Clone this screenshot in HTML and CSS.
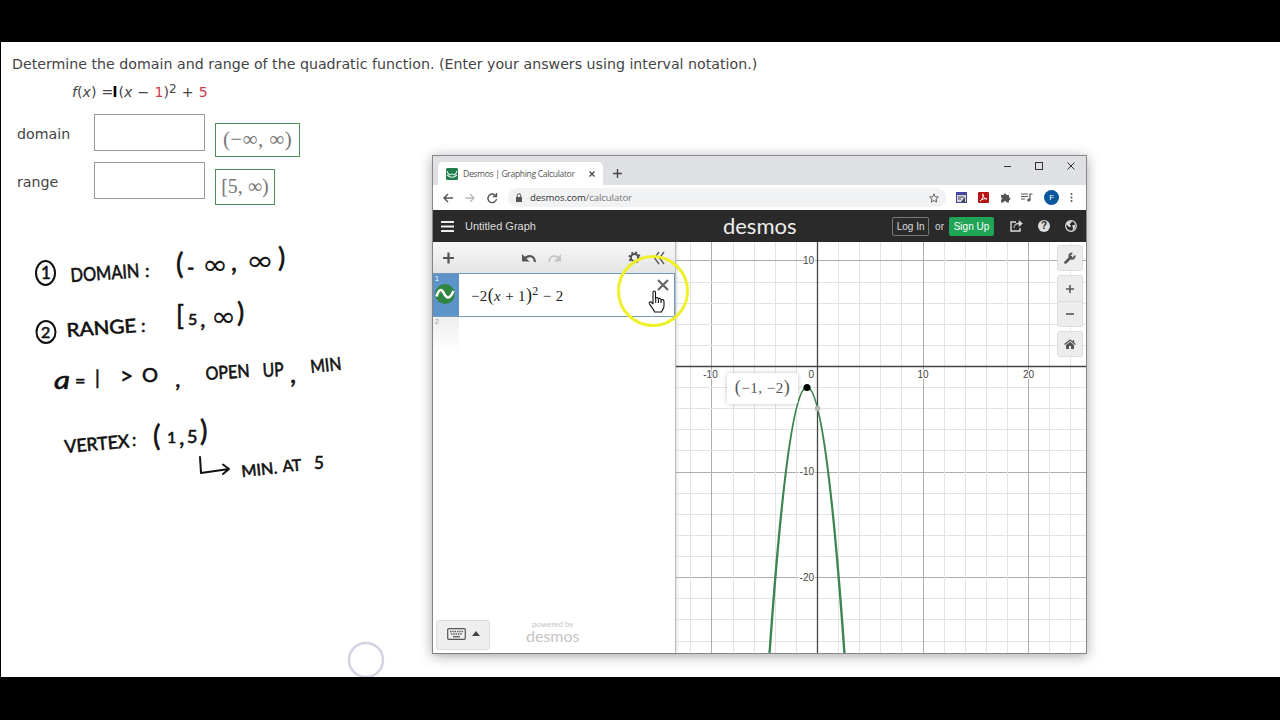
FILE: index.html
```html
<!DOCTYPE html>
<html lang="en">
<head>
    <meta charset="UTF-8">
    <meta name="viewport" content="width=device-width, initial-scale=1.0">
    <title>Domain and range of a quadratic function</title>
    <link rel="stylesheet" href="styles.css">
</head>
<body>
    <main class="board">
        <section class="question">
            <p class="prompt">Determine the domain and range of the quadratic function. (Enter your answers using interval notation.)</p>
            <p class="formula"><i>f</i>(<i>x</i>) =<b>l</b>(<i>x</i> − <span class="red">1</span>)<sup>2</sup> + <span class="red">5</span></p>
            <div class="answer-row">
                <label for="domain">domain</label>
                <input type="text" id="domain">
                <span class="answer answer-domain">(−∞, ∞)</span>
            </div>
            <div class="answer-row">
                <label for="range">range</label>
                <input type="text" id="range">
                <span class="answer answer-range">[5, ∞)</span>
            </div>
        </section>

        <!-- Handwritten notes -->
        <svg class="notes" viewBox="0 42 430 636" width="430" height="636">
            <g class="pen">
                <ellipse cx="45.5" cy="273" rx="9.5" ry="12"/>
                <ellipse cx="46" cy="332" rx="9.5" ry="11"/>
                <path d="M200 457L201 473L229 469M223 464.500L229 469L223 474"/>
            </g>
            <text x="41" y="279" font-size="17">1</text>
            <text x="71" y="282" font-size="19" textLength="69" lengthAdjust="spacingAndGlyphs" transform="rotate(-4 71 282)">DOMAIN</text>
            <text x="145" y="277" font-size="18">:</text>
            <text x="176" y="274" font-size="28">(</text>
            <text x="187" y="274" font-size="20">-</text>
            <text x="202" y="274" font-size="27" textLength="26" lengthAdjust="spacingAndGlyphs" class="inf">∞</text>
            <text x="231" y="271" font-size="26">,</text>
            <text x="246" y="270" font-size="27" textLength="28" lengthAdjust="spacingAndGlyphs" class="inf">∞</text>
            <text x="278" y="267" font-size="27">)</text>

            <text x="41" y="338" font-size="16">2</text>
            <text x="67" y="337" font-size="19" textLength="70" lengthAdjust="spacingAndGlyphs" transform="rotate(-4 67 337)">RANGE</text>
            <text x="141" y="332" font-size="18">:</text>
            <text x="176" y="325" font-size="26">[</text>
            <text x="188" y="325" font-size="16">5</text>
            <text x="200" y="327" font-size="24">,</text>
            <text x="211" y="326" font-size="27" textLength="25" lengthAdjust="spacingAndGlyphs" class="inf">∞</text>
            <text x="237" y="322" font-size="27">)</text>

            <text x="54" y="389" font-size="25" textLength="16" lengthAdjust="spacingAndGlyphs" font-style="italic">a</text>
            <text x="75" y="387" font-size="18">=</text>
            <text x="95" y="385" font-size="19">|</text>
            <text x="120" y="384" font-size="23">&gt;</text>
            <text x="142" y="382" font-size="19" textLength="16" lengthAdjust="spacingAndGlyphs">O</text>
            <text x="175" y="387" font-size="24">,</text>
            <text x="206" y="380" font-size="18" textLength="44" lengthAdjust="spacingAndGlyphs" transform="rotate(-4 206 380)">OPEN</text>
            <text x="263" y="377" font-size="19" textLength="21" lengthAdjust="spacingAndGlyphs" transform="rotate(-3 263 377)">UP</text>
            <text x="290" y="383" font-size="27">,</text>
            <text x="311" y="373" font-size="18" textLength="31" lengthAdjust="spacingAndGlyphs" transform="rotate(-6 311 373)">MIN</text>

            <text x="65" y="453" font-size="18" textLength="65" lengthAdjust="spacingAndGlyphs" transform="rotate(-5 65 453)">VERTEX</text>
            <text x="132" y="446" font-size="17">:</text>
            <text x="153" y="446" font-size="28">(</text>
            <text x="167" y="443" font-size="16">1</text>
            <text x="179" y="445" font-size="24">,</text>
            <text x="187" y="443" font-size="18">5</text>
            <text x="200" y="441" font-size="28">)</text>
            <text x="242" y="477" font-size="16" textLength="36" lengthAdjust="spacingAndGlyphs" transform="rotate(-6 242 477)">MIN.</text>
            <text x="283" y="472" font-size="16" textLength="19" lengthAdjust="spacingAndGlyphs" transform="rotate(-5 283 472)">AT</text>
            <text x="314" y="469" font-size="17">5</text>
            <circle class="spot" cx="366" cy="660" r="17"/>
        </svg>

        <div class="browser">
            <div class="tab-strip">
                <div class="tab">
                    <svg width="12" height="12" viewBox="0 0 12 12">
                        <rect width="12" height="12" rx="1.500" fill="#1f7a4c"/>
                        <path d="M1 3C3 9 5 6 6 6S9 9 11 3M1 7C4 10 8 10 11 7" fill="none" stroke="#d5efdf" stroke-width="1.100"/>
                    </svg>
                    <span class="tab-title">Desmos | Graphing Calculator</span>
                    <svg width="6" height="6" viewBox="0 0 6 6"><path d="M.5.5L5.500 5.500M5.500.5L.5 5.500" stroke="#444" stroke-width="1.200"/></svg>
                </div>
                <svg class="new-tab" width="9" height="9" viewBox="0 0 9 9"><path d="M4.500 0V9M0 4.500H9" stroke="#444" stroke-width="1.400"/></svg>
                <svg class="window-buttons" width="70" height="10" viewBox="0 0 70 10" fill="none" stroke="#333">
                    <path d="M0 5.500H7M63.500 1.500L70.500 8.500M70.500 1.500L63.500 8.500"/>
                    <rect x="31.500" y="1.500" width="7" height="7"/>
                </svg>
            </div>

            <div class="toolbar">
                <svg width="56" height="12" viewBox="0 0 56 12" fill="none" stroke-width="1.400">
                    <path d="M10 6H1M5 2L1 6L5 10" stroke="#555"/>
                    <path d="M22 6H31M27 2L31 6L27 10" stroke="#bbb"/>
                    <path d="M52.500 3.500A4.300 4.300 0 1 0 53.500 7M53.500 1V4.500H50" stroke="#555"/>
                </svg>
                <div class="address">
                    <svg width="8" height="10" viewBox="0 0 8 10"><rect x="1" y="4" width="6" height="5" fill="#555"/><path d="M2.200 4V2.500A1.800 1.800 0 0 1 5.800 2.500V4" fill="none" stroke="#555"/></svg>
                    <span class="url">desmos.com<span>/calculator</span></span>
                    <svg class="star" width="10" height="10" viewBox="0 0 10 10"><path d="M5 .8L6.200 3.700L9.300 4L7 6L7.700 9.100L5 7.500L2.300 9.100L3 6L.7 4L3.800 3.700Z" fill="none" stroke="#555" stroke-width=".9"/></svg>
                </div>
                <div class="extensions">
                    <svg width="11" height="11" viewBox="0 0 11 11"><rect width="11" height="11" fill="#44469c"/><rect x="1" y="3" width="9" height="7" fill="#d4d5df"/><path d="M2 5H8M2 7H5" stroke="#555"/><path d="M5 10L9 5V10Z" fill="#444"/></svg>
                    <svg width="11" height="11" viewBox="0 0 11 11"><rect width="11" height="11" rx="1" fill="#b91414"/><path d="M2 9C5 7 6 3 5 2S5 7 9 7C7 6 4 7 2 9" fill="none" stroke="#fff"/></svg>
                    <svg width="11" height="11" viewBox="0 0 11 11"><path d="M1 3H3.500A1.500 1.500 0 1 1 6.500 3H9V5.500A1.400 1.400 0 1 1 9 8.300V10.500H6.500A1.500 1.500 0 0 0 3.500 10.500H1V8A1.500 1.500 0 0 0 1 5.200Z" fill="#555"/></svg>
                    <svg width="12" height="11" viewBox="0 0 12 11"><path d="M0 2H7M0 4.500H7M0 7H4M9 8V2H11.500" fill="none" stroke="#555" stroke-width="1.200"/><circle cx="7.800" cy="8" r="1.600" fill="#555"/></svg>
                    <span class="avatar">F</span>
                    <svg width="3" height="11" viewBox="0 0 3 11" fill="#555"><circle cx="1.500" cy="2" r="1"/><circle cx="1.500" cy="5.500" r="1"/><circle cx="1.500" cy="9" r="1"/></svg>
                </div>
            </div>

            <header class="app-header">
                <svg width="13" height="11" viewBox="0 0 13 11"><path d="M0 1H13M0 5.500H13M0 10H13" stroke="#eee" stroke-width="1.800"/></svg>
                <span class="graph-title">Untitled Graph</span>
                <span class="logo">desmos</span>
                <div class="account">
                    <span class="btn login">Log In</span>
                    <span class="or">or</span>
                    <span class="btn signup">Sign Up</span>
                    <svg width="13" height="12" viewBox="0 0 13 12" fill="none" stroke="#ddd" stroke-width="1.400"><path d="M6 2H1V11H10V8"/><path d="M4 8C4 5 6 4 9 4V6.500L12.500 3.500L9 .7V3C5.500 3 4 5 4 8Z" fill="#ddd" stroke-width=".5"/></svg>
                    <span class="help">?</span>
                    <svg width="12" height="12" viewBox="0 0 12 12"><circle cx="6" cy="6" r="5.300" fill="none" stroke="#ddd" stroke-width="1.200"/><path d="M1 4L3 1.500L7 1L6 3L4.500 4L6 6L5 7.500L3 6ZM7 5.500L10.500 4.500L10 8L7.500 10.500L8 7.500Z" fill="#ddd"/></svg>
                </div>
            </header>

            <div class="calculator">
                <div class="panel">
                    <div class="panel-bar">
                        <svg width="242" height="31" viewBox="433 242 242 31" fill="none" stroke="#555">
                            <path d="M443 258H454M448.500 252.500V263.500" stroke-width="2.200"/>
                            <path d="M535 262C534 255 529 255 525 258" stroke-width="2.200"/><path d="M522 254V261.500H529.500Z" fill="#555" stroke="none"/>
                            <path d="M549 262C550 255 555 255 559 258" stroke="#c6c6c6" stroke-width="1.800"/><path d="M561 254V261.500H554Z" fill="#c6c6c6" stroke="none"/>
                            <circle cx="634.500" cy="257.500" r="3.600" stroke-width="2"/>
                            <circle cx="634.500" cy="257.500" r="5" stroke-width="2" stroke-dasharray="2 1.930"/>
                            <path d="M659 252L654.500 258L659 264M664 252L659.500 258L664 264" stroke-width="1.300"/>
                        </svg>
                    </div>
                    <div class="expression">
                        <div class="gutter">
                            <span class="index">1</span>
                            <svg class="curve-icon" width="20" height="20" viewBox="0 0 20 20"><circle cx="10" cy="10" r="10" fill="#2f8542"/><path d="M1.500 12.500C4 4.500 6.500 4.500 9 9.500S14.500 16 18.500 7" fill="none" stroke="#fff" stroke-width="2.600"/></svg>
                        </div>
                        <div class="math">−2<span class="paren">(</span><i>x</i> + 1<span class="paren">)</span><sup>2</sup> − 2</div>
                        <svg class="remove" width="12" height="12" viewBox="0 0 12 12"><path d="M1 1L11 11M11 1L1 11" stroke="#666" stroke-width="2.200"/></svg>
                    </div>
                    <div class="empty-row"><span class="index">2</span></div>
                    <div class="panel-footer">
                        <div class="keypad">
                            <svg width="19" height="12" viewBox="0 0 19 12"><rect x=".7" y=".7" width="17.600" height="10.600" rx="1" fill="none" stroke="#555" stroke-width="1.200"/><path d="M3 3.500H16M4 6H15" stroke="#555" stroke-width="1.300" stroke-dasharray="1.400 .9"/><path d="M6 8.700H13" stroke="#555" stroke-width="1.300"/></svg>
                            <svg width="8" height="5" viewBox="0 0 8 5"><path d="M0 5L4 0L8 5Z" fill="#444"/></svg>
                        </div>
                        <div class="powered"><small>powered by</small>desmos</div>
                    </div>
                </div>

                <div class="graph">
                    <svg width="410" height="412" viewBox="676 242 410 412">
                        <g id="grid"></g>
                        <path class="axis" d="M817.500 242V654M676 366.500H1086"/>
                        <g class="tick-labels">
                            <text x="814" y="264" text-anchor="end">10</text>
                            <text x="814" y="475" text-anchor="end">-10</text>
                            <text x="814" y="580.500" text-anchor="end">-20</text>
                            <text x="814" y="377.500" text-anchor="end">0</text>
                            <text x="710.500" y="377.500" text-anchor="middle">-10</text>
                            <text x="923" y="377.500" text-anchor="middle">10</text>
                            <text x="1028.500" y="377.500" text-anchor="middle">20</text>
                        </g>
                        <path class="curve" d="M769.500 654Q807 120.200 844.500 654"/>
                        <circle cx="817.500" cy="408.500" r="2.800" fill="#b3b8b3"/>
                        <circle cx="807" cy="387.500" r="3.500" fill="#000"/>
                    </svg>
                    <span class="point-label"><span class="paren">(</span>−1, −2<span class="paren">)</span></span>
                    <div class="graph-tools">
                        <span class="tool"><svg width="12" height="12" viewBox="0 0 12 12"><path d="M1.500 10.500L7 5" stroke="#555" stroke-width="2.600" stroke-linecap="round"/><path d="M10.500 3.500A2.600 2.600 0 1 1 8.300 1.500" fill="none" stroke="#555" stroke-width="2"/></svg></span>
                        <span class="zoom-tools">
                            <span><svg width="8" height="8" viewBox="0 0 8 8"><path d="M4 0V8M0 4H8" stroke="#555" stroke-width="1.600"/></svg></span>
                            <span><svg width="8" height="8" viewBox="0 0 8 8"><path d="M0 4H8" stroke="#555" stroke-width="1.600"/></svg></span>
                        </span>
                        <span class="tool"><svg width="12" height="10" viewBox="0 0 12 10"><path d="M.5 5.500L6 1L11.500 5.500M9.500 1V3.500" fill="none" stroke="#555" stroke-width="1.300"/><path d="M2 6L6 2.800L10 6V10H7V7H5V10H2Z" fill="#555"/></svg></span>
                    </div>
                </div>
            </div>
        </div>

        <!-- Highlighted mouse pointer -->
        <div class="pointer">
            <svg width="17" height="23" viewBox="0 0 17 23"><path d="M5 14V2.500C5 .5 7.500.5 7.500 2.500V8.500C8 7 10.200 7.300 10.300 9C11 7.900 13 8.300 13 10C14 9 16 9.500 16 11.500V16C16 19 14 20 13.500 22H6.500C6 19.500 3.500 17.500 1.500 14C.5 12 2.500 11 4 12.800L5 14M7.700 8.500V13M10.400 9.500V13M13 10.500V13" fill="#fff" stroke="#111" stroke-width="1.100" stroke-linejoin="round"/></svg>
        </div>
    </main>

    <script>
        // One grid line every 2 units, darker every 10
        const unit = 10.56;
        const grid = document.getElementById('grid');

        function addLine(name, d) {
            const line = document.createElementNS('http://www.w3.org/2000/svg', 'path');
            line.setAttribute('class', name);
            line.setAttribute('d', d);
            grid.appendChild(line);
        }

        for (let n = -26; n <= 26; n += 2) {
            const name = n % 10 === 0 ? 'major' : 'minor';
            const x = Math.floor(817.5 + n * unit) + 0.5;
            const y = Math.floor(366.5 - n * unit) + 0.5;
            addLine(name, `M${x} 242V654`);
            addLine(name, `M676 ${y}H1086`);
        }
    </script>
</body>
</html>
```

FILE: styles.css
```css
* {
    box-sizing: border-box;
}
body {
    margin: 0;
    height: 720px;
    padding: 42px 0 43px 1px;
    overflow: hidden;
    background-color: #000;
    font-family: "Liberation Sans", Arial, sans-serif;
}
svg {
    display: block;
    flex-shrink: 0;
}
.board {
    position: relative;
    height: 635px;
    overflow: hidden;
    background-color: #fff;
}

/* Question */
.question {
    padding: 12px 0 0 11px;
    font-family: "DejaVu Sans", Verdana, sans-serif;
    font-size: 14.2px;
    color: #444;
}
.question p {
    margin: 0;
    line-height: 20px;
    white-space: nowrap;
}
.question .formula {
    margin: 8px 0 12px 60px;
    font-size: 14.2px;
    word-spacing: 0.6px;
}
.formula b {
    color: #000;
    margin: 0 1px 0 -1px;
}
.formula sup {
    font-size: 12px;
    line-height: 0;
    vertical-align: 4px;
}
.red {
    color: #d2394b;
}
.answer-row {
    display: flex;
    align-items: flex-start;
    height: 43px;
    margin-bottom: 5px;
    padding-left: 5px;
}
.answer-row label {
    width: 77px;
    line-height: 40px;
}
.answer-row input {
    width: 111px;
    height: 37px;
    border: 1px solid #999;
    margin-right: 10px;
}
.answer {
    align-self: flex-end;
    border: 1px solid #4f8f57;
    font-family: "Liberation Serif", serif;
    color: #777;
    text-align: center;
    white-space: nowrap;
}
.answer-domain {
    width: 85px;
    height: 34px;
    line-height: 31px;
    font-size: 21px;
    letter-spacing: 0.4px;
}
.answer-range {
    width: 60px;
    height: 36px;
    line-height: 33px;
    font-size: 20px;
}

/* Notes */
.notes {
    position: absolute;
    top: 0;
    left: -1px;
    font-family: Lato, sans-serif;
}
.notes text {
    fill: #111;
    stroke: #111;
    stroke-width: 0.6;
    stroke-linejoin: round;
}
.notes .inf {
    font-family: "DejaVu Sans", sans-serif;
    stroke-width: 0.1;
}
.pen {
    fill: none;
    stroke: #111;
    stroke-width: 2;
    stroke-linecap: round;
    stroke-linejoin: round;
}
.spot {
    fill: none;
    stroke: #d3d3e4;
    stroke-width: 2.5;
}

/* Browser window */
.browser {
    position: absolute;
    top: 113px;
    left: 431px;
    width: 655px;
    height: 499px;
    display: flex;
    flex-direction: column;
    border: 1px solid #888;
    background-color: #fff;
    box-shadow: 0 2px 12px rgba(0, 0, 0, 0.35);
}
.tab-strip {
    display: flex;
    height: 29px;
    padding: 6px 12px 0 5px;
    background-color: #dee0e4;
}
.tab {
    display: flex;
    align-items: center;
    width: 165px;
    height: 23px;
    padding: 0 8px;
    border-radius: 5px 5px 0 0;
    background-color: #fff;
}
.tab-title {
    flex: 1;
    margin-left: 5px;
    font-family: "Open Sans", sans-serif;
    font-size: 8.6px;
    letter-spacing: -0.35px;
    color: #555;
    white-space: nowrap;
}
.new-tab {
    margin: 7px 0 0 10px;
}
.window-buttons {
    margin: -1px 0 0 auto;
    overflow: visible;
}
.toolbar {
    display: flex;
    align-items: center;
    height: 25px;
    padding: 0 13px 0 10px;
}
.address {
    display: flex;
    align-items: center;
    width: 438px;
    height: 19px;
    margin-left: 9px;
    padding: 0 7px;
    border-radius: 10px;
    background-color: #f1f2f4;
}
.url {
    margin-left: 7px;
    font-family: "Open Sans", sans-serif;
    font-size: 9.6px;
    letter-spacing: -0.1px;
    color: #333;
}
.url span {
    color: #777;
}
.star {
    margin-left: auto;
}
.extensions {
    display: flex;
    flex: 1;
    align-items: center;
    justify-content: space-between;
    margin-left: 10px;
}
.avatar {
    width: 15px;
    height: 15px;
    border-radius: 50%;
    background-color: #0b569c;
    color: #fff;
    font-size: 8px;
    line-height: 15px;
    text-align: center;
}

/* Calculator header */
.app-header {
    position: relative;
    display: flex;
    align-items: center;
    height: 32px;
    padding: 0 9px 0 8px;
    background-color: #2a2a2a;
    color: #ddd;
}
.graph-title {
    margin-left: 11px;
    font-size: 11px;
}
.logo {
    margin-left: 187px;
    font-family: Lato, sans-serif;
    font-size: 22px;
    line-height: 30px;
    color: #eee;
}
.account {
    display: flex;
    align-items: center;
    margin-left: auto;
    font-size: 10px;
}
.btn {
    height: 19px;
    border-radius: 2px;
    line-height: 18px;
    text-align: center;
    white-space: nowrap;
}
.login {
    width: 37px;
    border: 1px solid #777;
    line-height: 17px;
}
.or {
    margin: 0 5px 0 6px;
}
.signup {
    width: 45px;
    margin-right: 16px;
    background-color: #20a455;
    color: #fff;
    line-height: 19px;
}
.help {
    width: 12px;
    height: 12px;
    margin: 0 15px 0 15px;
    border-radius: 50%;
    background-color: #ddd;
    color: #2a2a2a;
    font-weight: bold;
    line-height: 12px;
    text-align: center;
}

/* Expression list */
.calculator {
    display: flex;
    flex: 1;
    min-height: 0;
}
.panel {
    display: flex;
    flex-direction: column;
    width: 243px;
    border-right: 1px solid #bbb;
    box-shadow: 1px 0 3px rgba(0, 0, 0, 0.15);
}
.panel-bar {
    height: 31px;
    background: linear-gradient(#f8f8f8, #e4e4e4);
    overflow: hidden;
}
.expression {
    display: flex;
    height: 44px;
    border: 1px solid #7199b9;
    border-left: 0;
}
.gutter {
    width: 26px;
    background-color: #5c93c8;
}
.index {
    display: block;
    padding: 1px 2px;
    font-size: 7px;
    line-height: 8px;
}
.gutter .index {
    color: #fff;
}
.curve-icon {
    margin-left: 2px;
}
.math,
.point-label {
    font-family: "Liberation Serif", serif;
    white-space: nowrap;
}
.math {
    padding-left: 12px;
    font-size: 15px;
    letter-spacing: 0.35px;
    line-height: 44px;
    color: #222;
}
.math sup {
    font-size: 12px;
    line-height: 0;
    vertical-align: 6px;
}
.paren {
    font-size: 1.2em;
    line-height: 0;
}
.remove {
    margin: 5px 5px 0 auto;
}
.empty-row {
    width: 26px;
    height: 34px;
    background: linear-gradient(#eee, #fff);
    color: #999;
}
.panel-footer {
    display: flex;
    align-items: flex-end;
    margin-top: auto;
    padding: 0 0 3px 3px;
}
.keypad {
    display: flex;
    align-items: center;
    gap: 6px;
    width: 54px;
    height: 30px;
    padding: 0 0 3px 10px;
    border: 1px solid #ddd;
    border-radius: 3px;
    background-color: #eee;
}
.powered {
    margin: 0 0 8px 36px;
    font-family: Lato, sans-serif;
    font-size: 16px;
    line-height: 13px;
    color: #c4c4c4;
    text-align: center;
}
.powered small {
    display: block;
    font-size: 8px;
    line-height: 10px;
}

/* Graph paper */
.graph {
    position: relative;
    flex: 1;
    overflow: hidden;
}
.minor {
    stroke: #e3e3e3;
}
.major {
    stroke: #adadad;
}
.axis {
    stroke: #444;
    stroke-width: 1.3;
}
.tick-labels {
    font-size: 10px;
    fill: #444;
    stroke: #fff;
    stroke-width: 2;
    paint-order: stroke;
}
.curve {
    fill: none;
    stroke: #3c8550;
    stroke-width: 2.4;
}
.point-label {
    position: absolute;
    top: 131px;
    left: 51px;
    width: 71px;
    height: 31px;
    border-radius: 3px;
    background-color: rgba(255, 255, 255, 0.95);
    box-shadow: 0 0 4px rgba(0, 0, 0, 0.25);
    font-size: 15px;
    letter-spacing: 0.5px;
    line-height: 30px;
    color: #555;
    text-align: center;
}
.graph-tools {
    position: absolute;
    top: 3px;
    right: 3px;
    display: flex;
    flex-direction: column;
    gap: 4px;
}
.tool,
.zoom-tools {
    width: 26px;
    border: 1px solid #ddd;
    border-radius: 3px;
    background-color: #ededed;
}
.tool,
.zoom-tools span {
    display: flex;
    align-items: center;
    justify-content: center;
    height: 26px;
}
.zoom-tools span {
    height: 25px;
}
.zoom-tools span + span {
    border-top: 1px solid #ddd;
}

/* Pointer */
.pointer {
    position: absolute;
    top: 213px;
    left: 616px;
    width: 72px;
    height: 72px;
    padding: 32px 0 0 28px;
    border: 3.5px solid #f0f02a;
    border-radius: 50%;
}
```
